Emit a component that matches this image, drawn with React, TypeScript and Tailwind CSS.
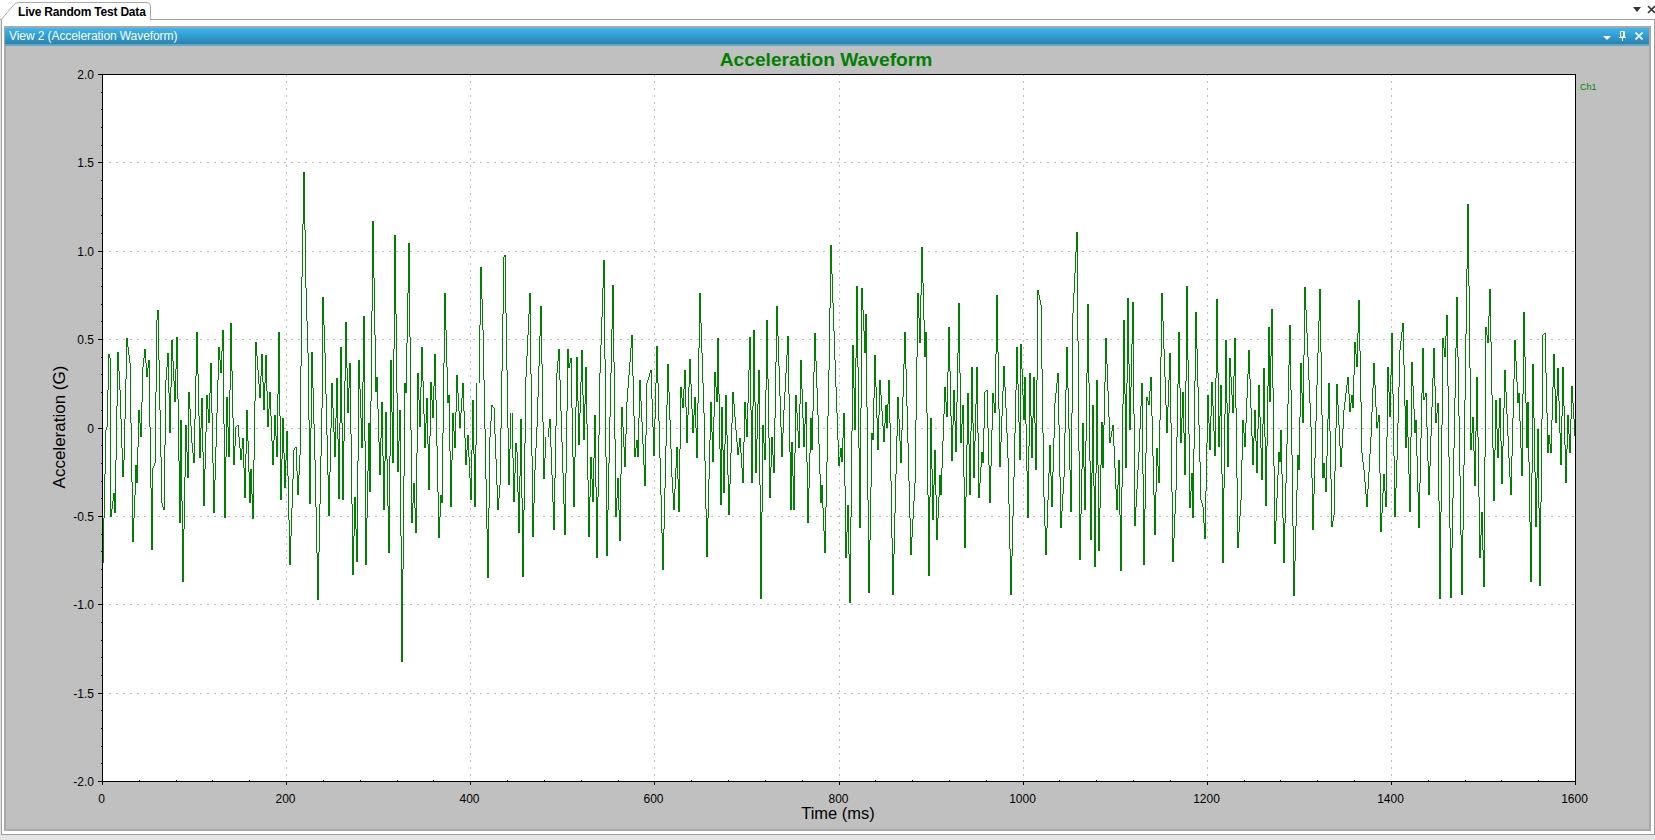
const Z5: number[] = [38,1238,45,840,50,830,55,612,58,625,62,1100,70,1030,73,1090,82,606,88,720,97,980,100,930,108,565,118,640,128,1175,132,1035,135,945,139,1000,146,780,150,860,157,650,163,598,168,680,174,630,178,830,183,1200,187,955,193,940,200,510,203,480,209,780,215,1060,220,1080,227,690,232,610,238,850,245,570,252,755,258,560,268,1120,272,810,278,1295,285,825,291,985,296,725,303,880,310,940,318,545,327,925,333,745,340,1068,348,735,354,820,361,640,370,1090,384,590,390,668,397,540,403,1103,409,740,415,920,421,520,430,945,436,830,441,826,450,930,456,865,463,1045,469,780,477,1060,481,958,487,1108,497,575,507,745,513,612,520,780,526,615,532,830,538,725,546,945,552,795,558,920,564,545,572,1050,577,805,583,1015,589,843,598,1245,610,900,616,890,622,1035,628,915,634,380,640,65,645,415,652,610,655,810,658,1062,664,605,672,930,683,1350,695,775,698,440,703,610,715,1098,723,700,733,920,738,685,745,1048,751,590,758,1050,767,515,772,790,778,640,787,1275,793,1040,799,1235,806,630,813,893,820,498,827,1245,834,820,838,1025,847,213,855,725,859,680,867,975,873,755,881,1080,887,785,894,1208,900,630,907,940,913,255,922,965,928,780,934,1535,942,700,946,730,954,280,963,1120,969,1000,975,1150,982,670,988,830,994,590,1002,895,1008,745,1014,1020,1021,695,1027,805,1033,612,1044,1165,1051,1035,1054,1060,1063,430,1072,760,1075,735,1081,1070,1088,790,1093,895,1100,675,1108,835,1117,700,1127,945,1132,855,1140,1050,1146,750,1153,1072,1159,700,1165,700,1172,352,1178,540,1191,1285,1199,862];
const Z6: number[] = [3,615,10,625,22,930,28,855,40,170,44,165,55,855,60,640,64,640,70,905,76,730,79,755,84,1000,91,658,97,1130,106,530,118,280,127,1010,134,810,139,680,151,318,160,838,165,710,172,710,177,658,190,990,199,520,205,448,223,1005,232,448,236,505,242,475,250,920,259,472,266,735,274,450,280,720,286,502,295,1010,301,770,307,905,313,645,320,1075,328,520,340,180,350,1068,358,650,367,255,376,950,382,835,388,1022,394,620,403,800,410,605,423,405,433,770,439,720,442,770,448,540,462,858,470,550,480,510,490,768,500,438,517,1110,532,492,544,830,550,930,558,740,564,935,571,560,577,625,583,510,589,730,598,478,607,700,612,590,619,775,628,280,640,640,649,1070,660,605,666,785,672,515,678,605,682,415,690,915,695,620,701,878,707,585,715,945,727,575,742,765,749,715,757,848,763,605,769,710,777,410,784,848,790,390,796,820,804,510,810,1198,817,675,823,780,829,360,838,893,844,710,850,820,859,318,875,770,880,630,892,408,901,930,905,725,911,930,917,585,924,745,931,480,940,740,945,605,952,970,961,655,965,750,973,400,982,645,990,910,995,855,1004,1060,1015,510,1022,135,1034,480,1045,798,1050,745,1053,785,1060,640,1067,1075,1073,915,1079,1210,1088,435,1094,690,1100,258,1108,985,1115,265,1122,458,1126,342,1135,1180,1143,700,1147,720,1153,465,1162,750,1168,540,1180,725,1185,615,1190,685,1195,540,1199,670];
const Z7: number[] = [7,1185,13,940,23,590,32,788,44,395,62,1065,72,850,82,280,88,428,94,140,103,470,106,395,115,1128,122,655,128,960,134,750,140,1020,148,825,152,885,163,560,168,650,175,380,184,782,189,570,196,755,205,310,212,728,217,615,224,1045,232,580,238,885,244,500,251,835,259,500,266,895,273,755,277,790,283,575,290,570,298,908,307,580,312,640,320,285,329,800,340,498,347,625,352,775,360,1185,370,830,379,440,387,780,392,432,400,660,403,530,411,955,418,520,423,775,429,530,436,810,443,270,452,315,460,890,466,1065,478,735,484,920,492,610,502,520,512,985,520,830,529,440,541,935,547,340,559,95,568,1080,577,670,583,930,591,312,600,1020,606,615,612,1100,618,540,626,1052,633,665,637,805,646,415,659,728,666,675,678,930,685,780,691,1112,700,360,706,805,713,295,718,690,726,305,733,978,746,755,753,550,761,1095,769,590,776,615,782,530,792,1005,799,745,805,850,815,280,830,700,839,460,847,1085,855,870,865,395,871,730,877,575,883,825,889,258,897,925,903,820,908,955,917,335,930,900,936,920,943,1018,951,585,958,750,965,545,972,768,979,298,986,740,991,555,998,1088,1005,420,1012,800,1018,475,1027,640,1033,415,1042,1043,1050,900,1057,660,1062,740,1076,450,1087,795,1092,630,1098,818,1105,555,1115,840,1119,505,1125,918,1134,380,1138,605,1144,328,1153,1033,1165,755,1168,785,1172,690,1181,1088,1197,375];
const Z8: number[] = [65,825,71,1248,82,825,85,870,92,550,97,728,104,320,120,740,127,1050,138,615,147,328,156,895,160,850,166,935,175,610,183,1040,190,1005,200,612,212,860,220,690,232,590,238,695,244,645,247,685,253,485,258,560,265,360,273,820,280,870,290,980,300,770,310,550,320,745,325,705,332,1055,340,883,345,980,352,560,358,710,363,460,372,1010,380,840,388,510,397,428,405,805,410,660,417,995,425,545,432,760,436,720,446,1043,456,505,461,660,466,640,476,945,491,505,496,730,501,670,508,1258,517,475,522,530,529,405,540,1255,560,352,575,1245,592,72,602,810,607,710,613,918,620,590,629,1133,634,995,640,1222,647,440,652,488,659,328,669,962,675,660,681,835,687,655,693,912,702,570,715,835,720,945,733,480,741,668,746,640,753,888,759,395,768,805,773,665,781,1205,788,552,795,1040,802,748,808,1218,816,465,822,460,832,818,836,765,842,820,851,522,857,730,863,565,871,855,878,562,885,910,891,705,897,818,903,618,914,768];

const PLOT_LEFT = 102;
const PLOT_RIGHT = 1575;
const PLOT_TOP = 74;
const PLOT_BOTTOM = 781;
const CHART_OFFSET = 46; // page y where the chart's grey area starts

const vertices: [number, number][] = [];
function addPts(data: number[], ox: number, oy: number) {
  for (let i = 0; i < data.length; i += 2) vertices.push([ox + data[i] / 3, oy + data[i + 1] / 3]);
}
addPts(Z5, 90, 150);
addPts(Z6, 490, 200);
addPts(Z7, 890, 200);
addPts(Z8, 1270, 180);

// Column-by-column trace: the plot draws its line as 1px vertical runs.
function buildWave(): string {
  const parts: string[] = [];
  let prevY = vertices[0][1];
  for (let v = 0; v < vertices.length - 1; v++) {
    const [x0, y0] = vertices[v];
    const [x1, y1] = vertices[v + 1];
    const c0 = Math.floor(x0);
    const c1 = Math.floor(x1);
    if (c1 === c0) {
      parts.push(`M${c0 + 0.5} ${prevY.toFixed(0)}V${y1.toFixed(0)}`);
      prevY = y1;
      continue;
    }
    for (let c = c0 + 1; c <= c1; c++) {
      const t = (c - c0) / (c1 - c0);
      const y = y0 + (y1 - y0) * t;
      parts.push(`M${c + 0.5} ${prevY.toFixed(0)}V${y.toFixed(0)}`);
      prevY = y;
    }
  }
  return parts.join("");
}
const WAVE = buildWave();

const yVals = ["2.0", "1.5", "1.0", "0.5", "0", "-0.5", "-1.0", "-1.5", "-2.0"];
const xVals = [0, 200, 400, 600, 800, 1000, 1200, 1400, 1600];
const yAt = (i: number) => PLOT_TOP + (i * (PLOT_BOTTOM - PLOT_TOP)) / 8;
const xAt = (i: number) => PLOT_LEFT + (i * (PLOT_RIGHT - PLOT_LEFT)) / 8;

function Chart() {
  const minorY: number[] = [];
  for (let i = 0; i <= 40; i++) if (i % 5 !== 0) minorY.push(PLOT_TOP + (i * (PLOT_BOTTOM - PLOT_TOP)) / 40);
  const minorX: number[] = [];
  for (let i = 0; i <= 40; i++) if (i % 5 !== 0) minorX.push(PLOT_LEFT + (i * (PLOT_RIGHT - PLOT_LEFT)) / 40);
  return (
    <svg width={1655} height={786} viewBox={`0 ${CHART_OFFSET} 1655 786`} className="block -ml-[6px]" style={{ fontFamily: "'Liberation Sans', Arial, sans-serif" }}>
      <rect x={PLOT_LEFT} y={PLOT_TOP} width={PLOT_RIGHT - PLOT_LEFT} height={PLOT_BOTTOM - PLOT_TOP} fill="#ffffff" />
      <g stroke="#bdbdbd" strokeWidth={1} strokeDasharray="2 5" shapeRendering="crispEdges">
        {yVals.slice(1, 8).map((_, i) => (
          <line key={i} x1={PLOT_LEFT} x2={PLOT_RIGHT} y1={Math.round(yAt(i + 1)) + 0.5} y2={Math.round(yAt(i + 1)) + 0.5} />
        ))}
        {xVals.slice(1, 8).map((_, i) => (
          <line key={i} y1={PLOT_TOP} y2={PLOT_BOTTOM} x1={Math.round(xAt(i + 1)) + 0.5} x2={Math.round(xAt(i + 1)) + 0.5} />
        ))}
      </g>
      <path d={WAVE} fill="none" stroke="#008000" strokeWidth={1} shapeRendering="crispEdges" />
      <rect x={PLOT_LEFT + 0.5} y={PLOT_TOP + 0.5} width={PLOT_RIGHT - PLOT_LEFT} height={PLOT_BOTTOM - PLOT_TOP} fill="none" stroke="#000" strokeWidth={1} shapeRendering="crispEdges" />
      <g stroke="#000" strokeWidth={1} shapeRendering="crispEdges">
        {yVals.map((_, i) => (
          <line key={i} x1={PLOT_LEFT - 4} x2={PLOT_LEFT} y1={Math.round(yAt(i)) + 0.5} y2={Math.round(yAt(i)) + 0.5} />
        ))}
        {minorY.map((y, i) => (
          <line key={i} x1={PLOT_LEFT - 1} x2={PLOT_LEFT} y1={Math.round(y) + 0.5} y2={Math.round(y) + 0.5} />
        ))}
        {xVals.map((_, i) => (
          <line key={i} y1={PLOT_BOTTOM} y2={PLOT_BOTTOM + 4} x1={Math.round(xAt(i)) + 0.5} x2={Math.round(xAt(i)) + 0.5} />
        ))}
        {minorX.map((x, i) => (
          <line key={i} y1={PLOT_BOTTOM - 1} y2={PLOT_BOTTOM} x1={Math.round(x) + 0.5} x2={Math.round(x) + 0.5} />
        ))}
      </g>
      <g fontSize={12} fill="#000">
        {yVals.map((t, i) => (
          <text key={t} x={PLOT_LEFT - 8} y={Math.round(yAt(i)) + 5} textAnchor="end">{t}</text>
        ))}
        {xVals.map((t, i) => (
          <text key={t} x={Math.round(xAt(i)) - 0.5} y={803} textAnchor="middle">{t}</text>
        ))}
      </g>
      <text x={826} y={66} textAnchor="middle" fontSize={19.2} fontWeight={700} fill="#008000">Acceleration Waveform</text>
      <text x={838} y={819} textAnchor="middle" fontSize={16.5} fill="#000">Time (ms)</text>
      <text transform="rotate(-90 65 427)" x={65} y={427} textAnchor="middle" fontSize={17} fill="#000">Acceleration (G)</text>
      <text x={1580} y={90} fontSize={9} fill="#008000">Ch1</text>
    </svg>
  );
}

export default function App() {
  return (
    <div className="w-[1655px] h-[840px] bg-[#e4e4e4] flex flex-col overflow-hidden" style={{ fontFamily: "'Liberation Sans', Arial, sans-serif" }}>
      <div className="h-5 shrink-0 bg-white border-b border-[#a0a0a0] flex items-center justify-between">
        <div className="relative w-[151px] h-5 pl-[18px] pt-[3px] text-[12px] leading-[18px] tracking-[-0.2px] font-bold text-black whitespace-nowrap z-10">
          <svg width="152" height="20" viewBox="0 0 152 20" className="absolute left-0 top-0">
            <path d="M0.5 20.5L14 4.5Q16 2.5 19 2.5H147Q150.5 2.5 150.5 6V20.5" fill="#fff" stroke="#a8a8a8" strokeWidth="1" />
          </svg>
          <span className="relative">Live Random Test Data</span>
        </div>
        <div className="flex items-center gap-[6px] -mr-px">
          <svg width="8" height="5" viewBox="0 0 8 5"><path d="M0 0h8L4 5z" fill="#333" /></svg>
          <svg width="9" height="9" viewBox="0 0 9 9"><path d="M1 1l7 7M8 1l-7 7" stroke="#333" strokeWidth="1.6" fill="none" /></svg>
        </div>
      </div>
      <div className="h-[815px] shrink-0 bg-white ml-px border-l border-r border-b border-[#a0a0a0] pt-[6px] pl-[2px] pr-[3px] pb-[3px] flex flex-col">
        <div className="flex-1 min-h-0 flex flex-col border-[2px] border-[#a8a8a8]">
          <div className="h-4 shrink-0 -ml-px flex items-center justify-between bg-gradient-to-b from-[#3cb7ee] to-[#2a83b1] pl-[4px] pr-[6px] text-[12px] leading-none tracking-[-0.08px] text-white">
            <span>View 2 (Acceleration Waveform)</span>
            <div className="flex items-center gap-2">
              <svg className="mt-[3px]" width="8" height="4" viewBox="0 0 8 4"><path d="M0 0h8L4 4z" fill="#fff" /></svg>
              <svg width="7" height="10" viewBox="0 0 7 10"><path d="M1.5 0.5h4v5.5h-4zM0 6.5h7M3.5 7v3M4.5 1v5" stroke="#fff" strokeWidth="1" fill="none" /></svg>
              <svg className="ml-px" width="8" height="8" viewBox="0 0 8 8"><path d="M0.5 0.5l7 7M7.5 0.5l-7 7" stroke="#fff" strokeWidth="1.6" fill="none" /></svg>
            </div>
          </div>
          <div className="h-[2px] shrink-0 -ml-px bg-[#62a9c8]" />
          <div className="flex-1 bg-[#c0c0c0] overflow-hidden">
            <Chart />
          </div>
        </div>
      </div>
    </div>
  );
}
